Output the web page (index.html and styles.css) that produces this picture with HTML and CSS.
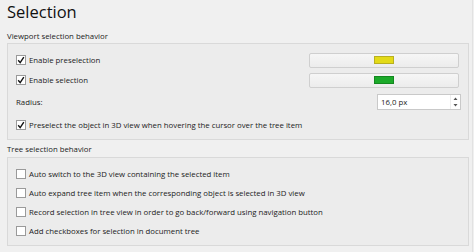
FILE: index.html
```html
<!DOCTYPE html>
<html>
<head>
<meta charset="utf-8">
<link rel="stylesheet" href="styles.css">
</head>
<body>
<div class="page">
  <h1 class="title">Selection</h1>

  <div class="legend">Viewport selection behavior</div>
  <div class="group g1">
    <div class="row r1">
      <span class="cb checked"><svg viewBox="0 0 10 10" width="10" height="10"><path d="M2.2 5.2 L4.2 7.6 L7.8 2.2" fill="none" stroke="#111" stroke-width="1.4"/></svg></span>
      <span class="lbl">Enable preselection</span>
      <span class="fill"></span>
      <span class="colorbtn"><span class="swatch yellow"></span></span>
    </div>
    <div class="row r2">
      <span class="cb checked"><svg viewBox="0 0 10 10" width="10" height="10"><path d="M2.2 5.2 L4.2 7.6 L7.8 2.2" fill="none" stroke="#111" stroke-width="1.4"/></svg></span>
      <span class="lbl">Enable selection</span>
      <span class="fill"></span>
      <span class="colorbtn"><span class="swatch green"></span></span>
    </div>
    <div class="row r3">
      <span class="lbl">Radius:</span>
      <span class="fill"></span>
      <span class="spin"><span class="spintext">16,0 px</span><span class="arrows"><svg viewBox="0 0 7 14" width="7" height="14"><path d="M1.5 5 L3.5 2.5 L5.5 5 Z M1.5 9 L3.5 11.5 L5.5 9 Z" fill="#555"/></svg></span></span>
    </div>
    <div class="row r4">
      <span class="cb checked"><svg viewBox="0 0 10 10" width="10" height="10"><path d="M2.2 5.2 L4.2 7.6 L7.8 2.2" fill="none" stroke="#111" stroke-width="1.4"/></svg></span>
      <span class="lbl">Preselect the object in 3D view when hovering the cursor over the tree item</span>
    </div>
  </div>

  <div class="legend l2">Tree selection behavior</div>
  <div class="group g2">
    <div class="row t"><span class="cb"></span><span class="lbl">Auto switch to the 3D view containing the selected item</span></div>
    <div class="row t"><span class="cb"></span><span class="lbl">Auto expand tree item when the corresponding object is selected in 3D view</span></div>
    <div class="row t"><span class="cb"></span><span class="lbl">Record selection in tree view in order to go back/forward using navigation button</span></div>
    <div class="row t"><span class="cb"></span><span class="lbl">Add checkboxes for selection in document tree</span></div>
  </div>
</div>
</body>
</html>
```

FILE: styles.css
```css
html, body {
  margin: 0;
  padding: 0;
  background: #f0f0f0;
}
body {
  width: 474px;
  height: 252px;
  overflow: hidden;
  font-family: "Open Sans", "Noto Sans", "Liberation Sans", sans-serif;
  font-size: 7.8px;
  color: #1b1b1b;
}
.page {
  padding: 0 6px 0 7px;
  border-right: 1px solid #e2e2e2;
  height: 252px;
  box-sizing: border-box;
  width: 473px;
}
.title {
  margin: 0;
  font-weight: 400;
  font-size: 16.5px;
  line-height: 24px;
  height: 28px;
  color: #111;
}
.legend {
  height: 15px;
  line-height: 17px;
}
.l2 {
  height: 17px;
  line-height: 19px;
}
.group {
  border: 1px solid #d9d9d9;
  background: #ececec;
  box-sizing: border-box;
  width: 462px;
}
.g1 {
  padding: 8px 8px 0 8px;
  height: 97px;
}
.g2 {
  padding: 6px 8px 0 8px;
  height: 89px;
}
.row {
  display: flex;
  align-items: center;
}
.r1 { height: 16px; }
.r2 { height: 16px; margin-top: 4px; }
.r3 { height: 16px; margin-top: 6px; }
.r4 { height: 16px; margin-top: 7px; }
.t { height: 19px; }
.cb {
  width: 10px;
  height: 10px;
  box-sizing: border-box;
  border: 1px solid #9a9a9a;
  background: #fff;
  display: flex;
  align-items: center;
  justify-content: center;
  margin-right: 3px;
  flex: none;
}
.cb svg { display: block; flex: none; }
.fill { flex: 1; }
.colorbtn {
  width: 150px;
  height: 15px;
  box-sizing: border-box;
  border: 1px solid #cfcfcf;
  border-radius: 2px;
  background: linear-gradient(#f6f6f6, #ececec);
  display: flex;
  align-items: center;
  justify-content: center;
  margin-right: 1px;
}
.swatch {
  width: 20px;
  height: 8px;
  box-sizing: border-box;
}
.yellow { background: #e3da17; border: 1px solid #b8b020; }
.green { background: #1caa2a; border: 1px solid #148820; }
.spin {
  width: 84px;
  height: 16px;
  box-sizing: border-box;
  border: 1px solid #c9c9c9;
  background: #fff;
  display: flex;
  align-items: center;
  margin-right: -1px;
}
.spintext {
  flex: 1;
  padding-left: 3px;
}
.arrows {
  width: 9px;
  height: 14px;
  display: flex;
  align-items: center;
  justify-content: center;
  border-left: 1px solid #eee;
}
.arrows svg { display: block; }
```
